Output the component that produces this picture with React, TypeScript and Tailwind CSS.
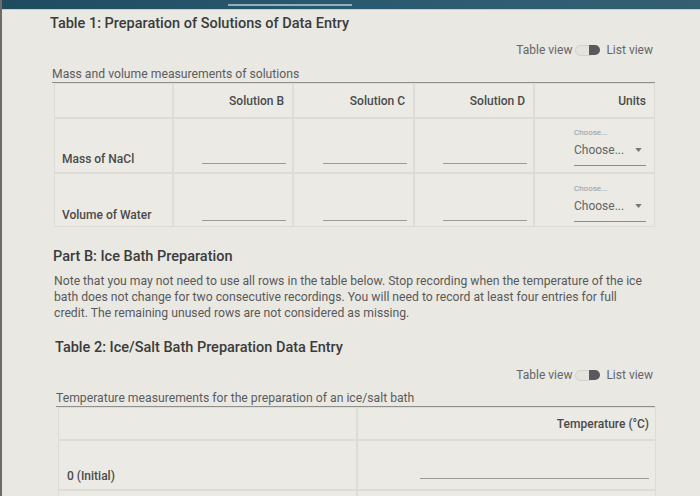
type Row = { label: string; h: string; labelPb: string; inputPb: string; choosePb: string };

const font = { fontFamily: "Roboto, 'Liberation Sans', sans-serif" };

function ViewToggle() {
  return (
    <div className="flex items-center justify-end pr-[2px] text-[12px] leading-[12px] text-[#666]">
      <span>Table view</span>
      {/* switch: pale track, dark knob sitting to the right */}
      <span className="relative ml-[3px] h-[12px] w-[28px]">
        <span className="absolute left-0 top-[1px] h-[11px] w-[20px] rounded-full border border-[#d2d1cc] bg-[#e4e3de]" />
        <span className="absolute right-[3px] top-[1px] h-[10px] w-[11px] rounded-r-full rounded-l-[3px] bg-[#5a5a5e]" />
      </span>
      <span className="ml-[3px]">List view</span>
    </div>
  );
}

function Blank({ w = "w-[84px]" }: { w?: string }) {
  return <div className={`${w} h-px bg-[#9a9a98]`} />;
}

function Choose() {
  return (
    <div className="flex w-[72px] flex-col border-b border-[#8d8d8b] pb-[8px]">
      <span className="text-[8px] leading-[10px] text-[#9a9a9a]">Choose...</span>
      <span className="mt-[5px] flex items-center justify-between text-[12px] leading-[14px] text-[#666]">
        Choose...
        <svg width="7" height="4" viewBox="0 0 8 5" className="mr-[4px]">
          <path d="M0 0h8L4 5z" fill="#777" />
        </svg>
      </span>
    </div>
  );
}

const heading = "text-[14.5px] font-medium leading-[18px] text-[#3b3b3b]";
const caption = "border-b border-[#8f8f8c] pb-[1px] text-[12.2px] leading-[14px] text-[#5c5c5c]";

export default function App() {
  const rows: Row[] = [
    { label: "Mass of NaCl", h: "h-[55px]", labelPb: "pb-[6px]", inputPb: "pb-[8px]", choosePb: "pb-[6px]" },
    { label: "Volume of Water", h: "h-[54px]", labelPb: "pb-[4px]", inputPb: "pb-[5px]", choosePb: "pb-[4px]" },
  ];
  const cell = "border border-[#dedcd7] bg-[#ebeae5]";

  return (
    <div
      className="relative h-[496px] w-[700px] overflow-hidden border-l-2 border-[#6d6c68] bg-[#e9e8e3]"
      style={font}
    >
      {/* window top bar */}
      <div className="relative h-[9px] bg-gradient-to-r from-[#1f4b5f] via-[#2a5a70] to-[#345f72]">
        <div className="absolute left-[226px] top-[4px] h-[2px] w-[124px] bg-[#8fb0bf]" />
      </div>
      <div className="h-px bg-[#c9ccca]" />

      <div className="pl-[48px] pr-[45px]">
        <h1 className={`mt-[5px] ${heading}`}>Table 1: Preparation of Solutions of Data Entry</h1>

        <div className="mt-[11px]">
          <ViewToggle />
        </div>

        <div className={`mt-[11px] ml-[2px] ${caption}`}>Mass and volume measurements of solutions</div>

        {/* table 1 */}
        <div className="ml-[4px] grid grid-cols-[119px_120px_121px_120px_121px] text-[12px] leading-[14px] text-[#4a4a4a]">
          <div className={`${cell} h-[35px]`} />
          {["Solution B", "Solution C", "Solution D", "Units"].map((h) => (
            <div key={h} className={`${cell} flex h-[35px] items-center justify-end pr-[8px] font-medium`}>
              {h}
            </div>
          ))}
          {rows.map((r) => (
            <div key={r.label} className="contents">
              <div className={`${cell} flex ${r.h} items-end ${r.labelPb} pl-[7px] font-medium`}>
                {r.label}
              </div>
              {[0, 1, 2].map((c) => (
                <div key={c} className={`${cell} flex items-end justify-end ${r.inputPb} pr-[6px]`}>
                  <Blank />
                </div>
              ))}
              <div className={`${cell} flex items-end justify-end ${r.choosePb} pr-[8px]`}>
                <Choose />
              </div>
            </div>
          ))}
        </div>

        <h2 className={`mt-[21px] ml-[3px] ${heading}`}>Part B: Ice Bath Preparation</h2>
        <p className="mt-[7px] ml-[4px] text-[12.2px] leading-[16px] text-[#5a5a5a]">
          <span className="block whitespace-nowrap">
            Note that you may not need to use all rows in the table below. Stop recording when the temperature of the ice
          </span>
          <span className="block whitespace-nowrap">
            bath does not change for two consecutive recordings. You will need to record at least four entries for full
          </span>
          <span className="block whitespace-nowrap">credit. The remaining unused rows are not considered as missing.</span>
        </p>
        <h2 className={`mt-[18px] ml-[5px] ${heading}`}>Table 2: Ice/Salt Bath Preparation Data Entry</h2>

        <div className="mt-[12px]">
          <ViewToggle />
        </div>

        <div className={`mt-[10px] ml-[6px] ${caption}`}>
          Temperature measurements for the preparation of an ice/salt bath
        </div>

        {/* table 2 */}
        <div className="ml-[8px] grid grid-cols-[299px_299px] text-[12px] leading-[14px] text-[#4a4a4a]">
          <div className={`${cell} h-[33px]`} />
          <div className={`${cell} flex h-[33px] items-center justify-end pr-[6px] font-medium`}>
            Temperature (°C)
          </div>
          <div className={`${cell} flex h-[50px] items-end pb-[6px] pl-[8px] font-medium`}>0 (Initial)</div>
          <div className={`${cell} flex items-end justify-end pb-[10px] pr-[6px]`}>
            <Blank w="w-[229px]" />
          </div>
          <div className={`${cell} h-[40px]`} />
          <div className={`${cell} h-[40px]`} />
        </div>
      </div>
    </div>
  );
}
